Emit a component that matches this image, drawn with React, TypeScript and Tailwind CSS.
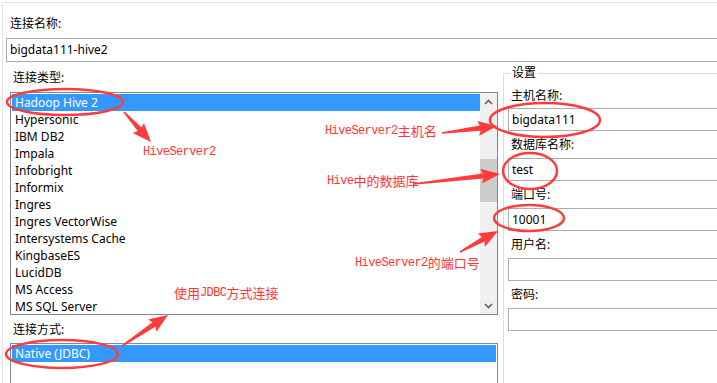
import React from 'react';

const listItems = [
  'Hadoop Hive 2',
  'Hypersonic',
  'IBM DB2',
  'Impala',
  'Infobright',
  'Informix',
  'Ingres',
  'Ingres VectorWise',
  'Intersystems Cache',
  'KingbaseES',
  'LucidDB',
  'MS Access',
  'MS SQL Server',
];

const fields = [
  { label: '主机名称:', value: 'bigdata111' },
  { label: '数据库名称:', value: 'test' },
  { label: '端口号:', value: '10001' },
  { label: '用户名:', value: '' },
  { label: '密码:', value: '' },
];

// red note, latin part is half width like the SimSun look
function Note({ x, y, parts }: { x: number; y: number; parts: string[] }) {
  return (
    <div className="absolute flex items-center h-[16px] text-[#ff3434] whitespace-nowrap" style={{ left: x, top: y - 8 }}>
      {parts.map((p, i) =>
        /^[\x00-\x7f]+$/.test(p) ? (
          <span key={i} className="text-[12px] tracking-[-0.6px] font-['Liberation_Mono',monospace]">{p}</span>
        ) : (
          <span key={i} className="text-[13px] font-['Noto_Sans_CJK_SC',sans-serif]">{p}</span>
        )
      )}
    </div>
  );
}

function arrowPoints(x1: number, y1: number, x2: number, y2: number) {
  const dx = x2 - x1;
  const dy = y2 - y1;
  const len = Math.hypot(dx, dy);
  const ux = dx / len;
  const uy = dy / len;
  const px = -uy;
  const py = ux;
  const head = 17;
  const bx = x2 - ux * head;
  const by = y2 - uy * head;
  const pts = [
    [x1 + px * 0.8, y1 + py * 0.8],
    [bx + px * 2.6, by + py * 2.6],
    [bx + px * 7.5 - ux * 2, by + py * 7.5 - uy * 2],
    [x2, y2],
    [bx - px * 7.5 - ux * 2, by - py * 7.5 - uy * 2],
    [bx - px * 2.6, by - py * 2.6],
    [x1 - px * 0.8, y1 - py * 0.8],
  ];
  return pts.map((p) => p.map((v) => v.toFixed(1)).join(',')).join(' ');
}

function Chevron({ up }: { up?: boolean }) {
  return (
    <svg width="9" height="6" viewBox="0 0 9 6">
      <polyline
        points={up ? '1,5 4.5,1.5 8,5' : '1,1 4.5,4.5 8,1'}
        fill="none"
        stroke="#606060"
        strokeWidth="1.6"
      />
    </svg>
  );
}

export default function App() {
  return (
    <div className="relative w-[717px] h-[383px] overflow-hidden bg-white text-black text-[12px] font-['Noto_Sans','Noto_Sans_CJK_SC',sans-serif]">
      <div className="mt-[2px] ml-[2px] h-[381px] border-t border-l border-[#e3e3e3] pl-[3px]">
        <div className="h-[16px] mt-[13px] ml-[4px] leading-[16px]">连接名称:</div>
        <div className="mt-[6px] w-[720px] h-[24px] border border-[#adadad] pl-[3px] flex items-center">
          bigdata111-hive2
        </div>

        <div className="flex">
          {/* left column */}
          <div className="w-[488px] ml-[4px] shrink-0">
            <div className="h-[16px] mt-[8px] ml-[3px] leading-[16px]">连接类型:</div>
            <div className="mt-[6px] h-[223px] border border-[#828790] flex">
              <div className="flex-1 pl-[1px] pt-[1px] overflow-hidden">
                {listItems.map((item, i) => (
                  <div
                    key={item}
                    className={
                      i === 0
                        ? 'h-[17px] leading-[17px] pl-[3px] bg-[#3399ff] text-white'
                        : 'h-[17px] leading-[17px] pl-[3px]'
                    }
                  >
                    {item}
                  </div>
                ))}
              </div>
              <div className="w-[17px] bg-[#f0f0f0] flex flex-col items-center">
                <div className="h-[17px] flex items-center justify-center">
                  <Chevron up />
                </div>
                <div className="mt-[49px] w-[17px] h-[43px] bg-[#cdcdcd]" />
                <div className="flex-1" />
                <div className="h-[17px] flex items-center justify-center">
                  <Chevron />
                </div>
              </div>
            </div>
            <div className="h-[16px] mt-[7px] ml-[3px] leading-[16px]">连接方式:</div>
            <div className="mt-[5px] h-[60px] border border-[#828790] p-[1px]">
              <div className="h-[17px] leading-[17px] pl-[3px] bg-[#3399ff] text-white">Native (JDBC)</div>
            </div>
          </div>

          {/* settings group */}
          <div className="relative ml-[5px] mt-[11px] flex-1 border-t border-l border-[#dcdcdc] pl-[4px] pt-[14px]">
            <div className="absolute -top-[9px] left-[6px] bg-white px-[2px] h-[16px] leading-[16px]">设置</div>
            {fields.map((f, i) => (
              <div key={f.label} className={i === 0 ? '' : 'mt-[6px]'}>
                <div className="h-[16px] leading-[16px] ml-[3px]">{f.label}</div>
                <div className={`${i === 0 ? 'mt-[4px]' : 'mt-[5px]'} w-[260px] h-[23px] border border-[#adadad] pl-[3px] flex items-center`}>
                  {f.value}
                </div>
              </div>
            ))}
          </div>
        </div>
      </div>

      {/* annotations drawn over the dialog */}
      <svg className="absolute inset-0 pointer-events-none" width="717" height="383">
        <g fill="none" stroke="#ff3b3b" strokeWidth="2.5">
          <ellipse cx="65" cy="102" rx="58" ry="13" />
          <ellipse cx="545" cy="120" rx="55" ry="17" />
          <ellipse cx="530" cy="171" rx="27" ry="18" />
          <ellipse cx="529" cy="218" rx="35" ry="13" />
          <ellipse cx="62" cy="354" rx="56" ry="14" />
        </g>
        <g fill="#ff3b3b">
          <polygon points={arrowPoints(124, 112, 151, 142)} />
          <polygon points={arrowPoints(442, 133, 497, 126)} />
          <polygon points={arrowPoints(413, 184, 500, 174)} />
          <polygon points={arrowPoints(460, 252, 498, 231)} />
          <polygon points={arrowPoints(122, 346, 168, 315)} />
        </g>
      </svg>
      <Note x={143} y={152} parts={['HiveServer2']} />
      <Note x={325} y={131} parts={['HiveServer2', '主机名']} />
      <Note x={327} y={181} parts={['Hive', '中的数据库']} />
      <Note x={355} y={263} parts={['HiveServer2', '的端口号']} />
      <Note x={174} y={293} parts={['使用', 'JDBC', '方式连接']} />
    </div>
  );
}
